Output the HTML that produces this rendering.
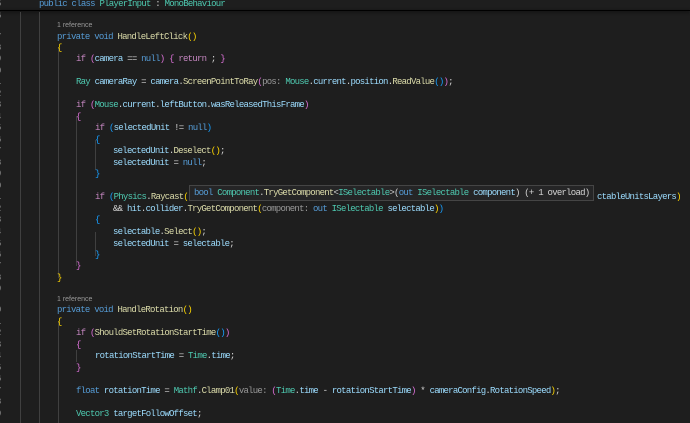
<!DOCTYPE html>
<html><head><style>
body{margin:0;width:690px;height:423px;background:#1e1e1e;overflow:hidden;position:relative;font-family:"Liberation Mono",monospace;font-size:9px;letter-spacing:-0.75px;color:#d4d4d4}
.l{position:absolute;left:0;height:12px;line-height:12px;white-space:pre}
.n{position:absolute;left:-4px;color:#858585;width:8px}
.c{position:absolute;left:39px}
.k{color:#569cd6}.p{color:#c586c0}.t{color:#4ec9b0}.m{color:#dcdcaa}.v{color:#9cdcfe}.h{color:#999}.y{color:#ffd700}.pk{color:#da70d6}.b{color:#179fff}
.ref{position:absolute;font-family:"Liberation Sans",sans-serif;font-size:7px;letter-spacing:0;color:#999;left:57px}
.g{position:absolute;width:1px;background:#404040}
</style></head><body>
<div style="position:absolute;left:0;top:10px;width:690px;height:1px;background:#000;box-shadow:0 1px 3px #000"></div>
<div class="g" style="left:20px;top:12px;height:411px"></div>
<div class="g" style="left:39px;top:12px;height:411px"></div>
<div class="g" style="left:58px;top:48px;height:230px"></div>
<div class="g" style="left:76px;top:116px;height:150px"></div>
<div class="g" style="left:95px;top:140px;height:30px"></div>
<div class="g" style="left:95px;top:232px;height:24px"></div>
<div class="g" style="left:58px;top:322px;height:101px"></div>
<div class="g" style="left:76px;top:350px;height:12px"></div>

<div class="l" style="top:-2px"><span class="n">5</span><span class="c"><span class="k">public class</span> <span class="t">PlayerInput</span> : <span class="t">MonoBehaviour</span></span></div>
<div class="l" style="top:10px"><span class="n">6</span></div>
<div class="ref" style="top:22px">1 reference</div>
<div class="l" style="top:31px"><span class="n">7</span><span class="c" style="left:57px"><span class="k">private void</span> <span class="m">HandleLeftClick</span><span class="y">()</span></span></div>
<div class="l" style="top:42px"><span class="n">8</span><span class="c" style="left:57px"><span class="y">{</span></span></div>
<div class="l" style="top:53px"><span class="n">9</span><span class="c" style="left:76px"><span class="p">if</span> <span class="pk">(</span><span class="v">camera</span> == <span class="k">null</span><span class="pk">)</span> <span class="pk">{</span> <span class="p">return</span> ; <span class="pk">}</span></span></div>
<div class="l" style="top:65px"><span class="n">0</span></div>
<div class="l" style="top:76px"><span class="n">1</span><span class="c" style="left:76px"><span class="t">Ray</span> <span class="v">cameraRay</span> = <span class="v">camera</span>.<span class="m">ScreenPointToRay</span><span class="pk">(</span><span class="h">pos:</span> <span class="t">Mouse</span>.<span class="v">current</span>.<span class="v">position</span>.<span class="m">ReadValue</span><span class="b">()</span><span class="pk">)</span>;</span></div>
<div class="l" style="top:88px"><span class="n">2</span></div>
<div class="l" style="top:99px"><span class="n">3</span><span class="c" style="left:76px"><span class="p">if</span> <span class="pk">(</span><span class="t">Mouse</span>.<span class="v">current</span>.<span class="v">leftButton</span>.<span class="v">wasReleasedThisFrame</span><span class="pk">)</span></span></div>
<div class="l" style="top:111px"><span class="n">4</span><span class="c" style="left:76px"><span class="pk">{</span></span></div>
<div class="l" style="top:122px"><span class="n">5</span><span class="c" style="left:95px"><span class="p">if</span> <span class="b">(</span><span class="v">selectedUnit</span> != <span class="k">null</span><span class="b">)</span></span></div>
<div class="l" style="top:134px"><span class="n">6</span><span class="c" style="left:95px"><span class="b">{</span></span></div>
<div class="l" style="top:145px"><span class="n">7</span><span class="c" style="left:113px"><span class="v">selectedUnit</span>.<span class="m">Deselect</span><span class="y">()</span>;</span></div>
<div class="l" style="top:157px"><span class="n">8</span><span class="c" style="left:113px"><span class="v">selectedUnit</span> = <span class="k">null</span>;</span></div>
<div class="l" style="top:168px"><span class="n">9</span><span class="c" style="left:95px"><span class="b">}</span></span></div>
<div class="l" style="top:180px"><span class="n">0</span></div>
<div class="l" style="top:191px"><span class="n">1</span><span class="c" style="left:95px"><span class="p">if</span> <span class="b">(</span><span class="t">Physics</span>.<span class="m">Raycast</span><span class="y">(</span></span><span class="c" style="left:597px"><span class="v">ctableUnitsLayers</span><span class="y">)</span></span></div>
<div class="l" style="top:203px"><span class="n">2</span><span class="c" style="left:113px">&amp;&amp; <span class="v">hit</span>.<span class="v">collider</span>.<span class="m">TryGetComponent</span><span class="y">(</span><span class="h">component:</span> <span class="k">out</span> <span class="t">ISelectable</span> <span class="v">selectable</span><span class="y">)</span><span class="b">)</span></span></div>
<div class="l" style="top:214px"><span class="n">3</span><span class="c" style="left:95px"><span class="b">{</span></span></div>
<div class="l" style="top:226px"><span class="n">4</span><span class="c" style="left:113px"><span class="v">selectable</span>.<span class="m">Select</span><span class="y">()</span>;</span></div>
<div class="l" style="top:238px"><span class="n">5</span><span class="c" style="left:113px"><span class="v">selectedUnit</span> = <span class="v">selectable</span>;</span></div>
<div class="l" style="top:249px"><span class="n">6</span><span class="c" style="left:95px"><span class="b">}</span></span></div>
<div class="l" style="top:260px"><span class="n">7</span><span class="c" style="left:76px"><span class="pk">}</span></span></div>
<div class="l" style="top:272px"><span class="n">8</span><span class="c" style="left:57px"><span class="y">}</span></span></div>
<div class="l" style="top:283px"><span class="n">9</span></div>
<div class="ref" style="top:296px">1 reference</div>
<div class="l" style="top:304px"><span class="n">0</span><span class="c" style="left:57px"><span class="k">private void</span> <span class="m">HandleRotation</span><span class="y">()</span></span></div>
<div class="l" style="top:316px"><span class="n">1</span><span class="c" style="left:57px"><span class="y">{</span></span></div>
<div class="l" style="top:327px"><span class="n">2</span><span class="c" style="left:76px"><span class="p">if</span> <span class="pk">(</span><span class="m">ShouldSetRotationStartTime</span><span class="b">()</span><span class="pk">)</span></span></div>
<div class="l" style="top:339px"><span class="n">3</span><span class="c" style="left:76px"><span class="pk">{</span></span></div>
<div class="l" style="top:350px"><span class="n">4</span><span class="c" style="left:95px"><span class="v">rotationStartTime</span> = <span class="t">Time</span>.<span class="v">time</span>;</span></div>
<div class="l" style="top:362px"><span class="n">5</span><span class="c" style="left:76px"><span class="pk">}</span></span></div>
<div class="l" style="top:373px"><span class="n">6</span></div>
<div class="l" style="top:385px"><span class="n">7</span><span class="c" style="left:76px"><span class="k">float</span> <span class="v">rotationTime</span> = <span class="t">Mathf</span>.<span class="m">Clamp01</span><span class="y">(</span><span class="h">value:</span> <span class="pk">(</span><span class="t">Time</span>.<span class="v">time</span> - <span class="v">rotationStartTime</span><span class="pk">)</span> * <span class="v">cameraConfig</span>.<span class="v">RotationSpeed</span><span class="y">)</span>;</span></div>
<div class="l" style="top:396px"><span class="n">8</span></div>
<div class="l" style="top:408px"><span class="n">9</span><span class="c" style="left:76px"><span class="t">Vector3</span> <span class="v">targetFollowOffset</span>;</span></div>

<div style="position:absolute;left:189px;top:185px;width:405px;height:16px;background:#252526;border:1px solid #454545;box-sizing:border-box;line-height:14px;white-space:pre;padding-left:4px"><span class="k">bool</span> <span class="t">Component</span>.<span class="m">TryGetComponent</span>&lt;<span class="t">ISelectable</span>&gt;(<span class="k">out</span> <span class="t">ISelectable</span> <span class="v">component</span>) (+ 1 overload)</div>
</body></html>
